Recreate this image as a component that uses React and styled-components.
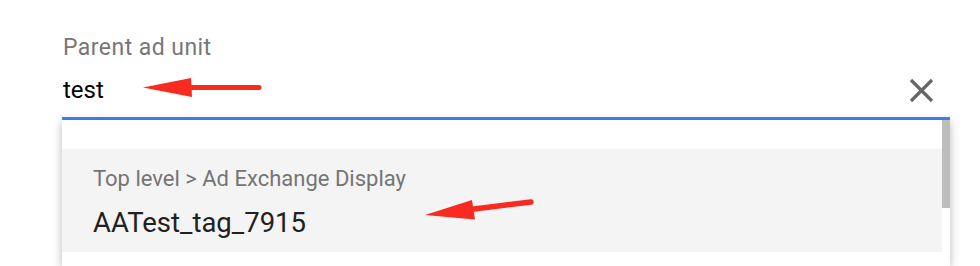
import React from "react";
import styled, { createGlobalStyle } from "styled-components";

const GlobalStyle = createGlobalStyle`
  html, body {
    margin: 0;
    padding: 0;
    background: #ffffff;
  }
  body {
    font-family: Roboto, "Noto Sans", Arial, sans-serif;
    width: 980px;
    height: 266px;
    overflow: hidden;
  }
`;

const Page = styled.div`
  position: relative;
  width: 980px;
  height: 266px;
  padding: 35px 0 0 62px;
  box-sizing: border-box;
  overflow: hidden;
`;

const Field = styled.div`
  width: 888px;
`;

const Label = styled.div`
  font-size: 23px;
  line-height: 26px;
  letter-spacing: 0.45px;
  color: #777777;
  padding-left: 1px;
`;

const InputRow = styled.div`
  display: flex;
  align-items: center;
  height: 40px;
  margin-top: 9px;
  padding: 0 16px 7px 1px;
  border-bottom: 3px solid #4285f4;
`;

const Value = styled.div`
  flex: 1;
  font-size: 24px;
  line-height: 40px;
  color: #000000;
`;

const ClearButton = styled.button`
  display: flex;
  align-items: center;
  justify-content: center;
  width: 25px;
  height: 25px;
  padding: 0;
  border: 0;
  background: none;
  color: #666666;
  cursor: pointer;
`;

const Panel = styled.div`
  display: flex;
  width: 888px;
  height: 146px;
  background: #ffffff;
  box-shadow: 0 2px 9px rgba(0, 0, 0, 0.28);
`;

const List = styled.div`
  flex: 1;
  padding-top: 29px;
`;

const Option = styled.div`
  background: ${(p) => (p.$active ? "#f4f4f4" : "transparent")};
  padding: 17px 0 13px 31px;
`;

const Path = styled.div`
  font-size: 22px;
  line-height: 26px;
  color: #757575;
`;

const Name = styled.div`
  margin-top: 15px;
  font-size: 27.5px;
  line-height: 32px;
  color: #212121;
`;

const Track = styled.div`
  width: 8px;
  background: #ffffff;
`;

const Thumb = styled.div`
  height: 88px;
  background: #bdbdbd;
`;

const Annotations = styled.svg`
  position: absolute;
  left: 0;
  top: 0;
  pointer-events: none;
`;

const RED = "#f92a1f";

const CloseIcon = () => (
  <svg width="25" height="25" viewBox="0 0 25 25">
    <path
      d="M2 2 L23 23 M23 2 L2 23"
      stroke="currentColor"
      strokeWidth="3.2"
      fill="none"
    />
  </svg>
);

const App = () => {
  return (
    <>
      <GlobalStyle />
      <Page>
        <Field>
          <Label>Parent ad unit</Label>
          <InputRow>
            <Value>test</Value>
            <ClearButton aria-label="Clear">
              <CloseIcon />
            </ClearButton>
          </InputRow>
        </Field>
        <Panel>
          <List>
            <Option $active>
              <Path>Top level &gt; Ad Exchange Display</Path>
              <Name>AATest_tag_7915</Name>
            </Option>
          </List>
          <Track>
            <Thumb />
          </Track>
        </Panel>
        <Annotations width="980" height="266" viewBox="0 0 980 266">
          <polygon points="143,87.5 191,78 192,97" fill={RED} />
          <line
            x1="188"
            y1="87.5"
            x2="259"
            y2="87.5"
            stroke={RED}
            strokeWidth="5"
            strokeLinecap="round"
          />
          <polygon points="425,215 472,200 475,219.5" fill={RED} />
          <line
            x1="470"
            y1="209.5"
            x2="531"
            y2="202"
            stroke={RED}
            strokeWidth="5.5"
            strokeLinecap="round"
          />
        </Annotations>
      </Page>
    </>
  );
};

export default App;
